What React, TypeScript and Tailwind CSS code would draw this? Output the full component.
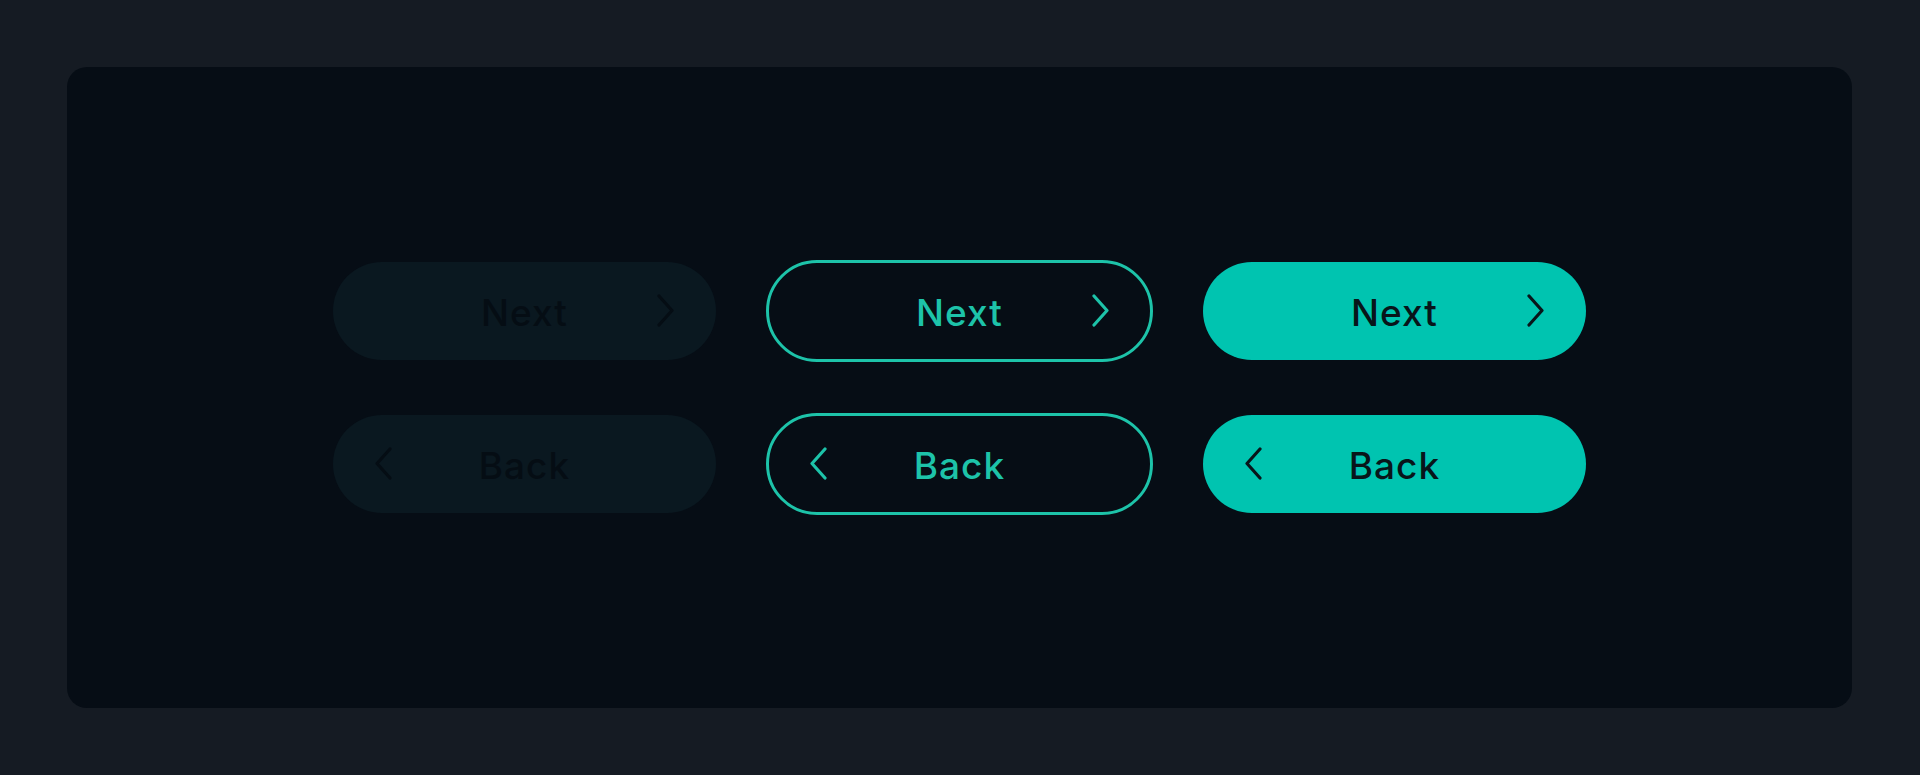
import React from "react";

type Variant = "ghost" | "outline" | "solid";

function Chevron({ dir, color }: { dir: "left" | "right"; color: string }) {
  const pts = dir === "right" ? "3,2 16,16.5 3,31" : "15,2 2,16.5 15,31";
  return (
    <svg width="18" height="33" viewBox="0 0 18 33" fill="none">
      <polyline points={pts} stroke={color} strokeWidth="3.2" strokeLinecap="round" strokeLinejoin="round" />
    </svg>
  );
}

function NavButton({ variant, kind }: { variant: Variant; kind: "next" | "back" }) {
  const base =
    "grid grid-cols-[18px_1fr_18px] items-center w-[383px] h-[98px] rounded-full px-[42px] text-[37px] font-medium tracking-[1px]";
  const styles: Record<Variant, string> = {
    ghost: "bg-[#0a1820] text-[#050d14]",
    outline: "bg-transparent text-[#1dc3a9] outline-[3px] outline-solid outline-[#1dc3a9] outline-offset-[-1px]",
    solid: "bg-[#00c4b0] text-[#08151a]",
  };
  const iconColor = variant === "ghost" ? "#050d14" : variant === "outline" ? "#1dc3a9" : "#08151a";
  return (
    <div className={`${base} ${styles[variant]}`} style={{ fontFamily: "Inter, 'Noto Sans', sans-serif" }}>
      <div className="flex items-center justify-center">
        {kind === "back" && <Chevron dir="left" color={iconColor} />}
      </div>
      <div className="text-center leading-none pt-[3px]">{kind === "next" ? "Next" : "Back"}</div>
      <div className="flex items-center justify-center">
        {kind === "next" && <Chevron dir="right" color={iconColor} />}
      </div>
    </div>
  );
}

export default function App() {
  return (
    <div className="w-[1920px] h-[775px] bg-[#151b23] p-[67px] pr-[68px]">
      <div className="w-full h-full rounded-[20px] bg-[#060d15] flex items-center justify-center">
        <div className="grid grid-cols-3 gap-x-[52px] gap-y-[55px] pb-[1px]">
          <NavButton variant="ghost" kind="next" />
          <NavButton variant="outline" kind="next" />
          <NavButton variant="solid" kind="next" />
          <NavButton variant="ghost" kind="back" />
          <NavButton variant="outline" kind="back" />
          <NavButton variant="solid" kind="back" />
        </div>
      </div>
    </div>
  );
}
